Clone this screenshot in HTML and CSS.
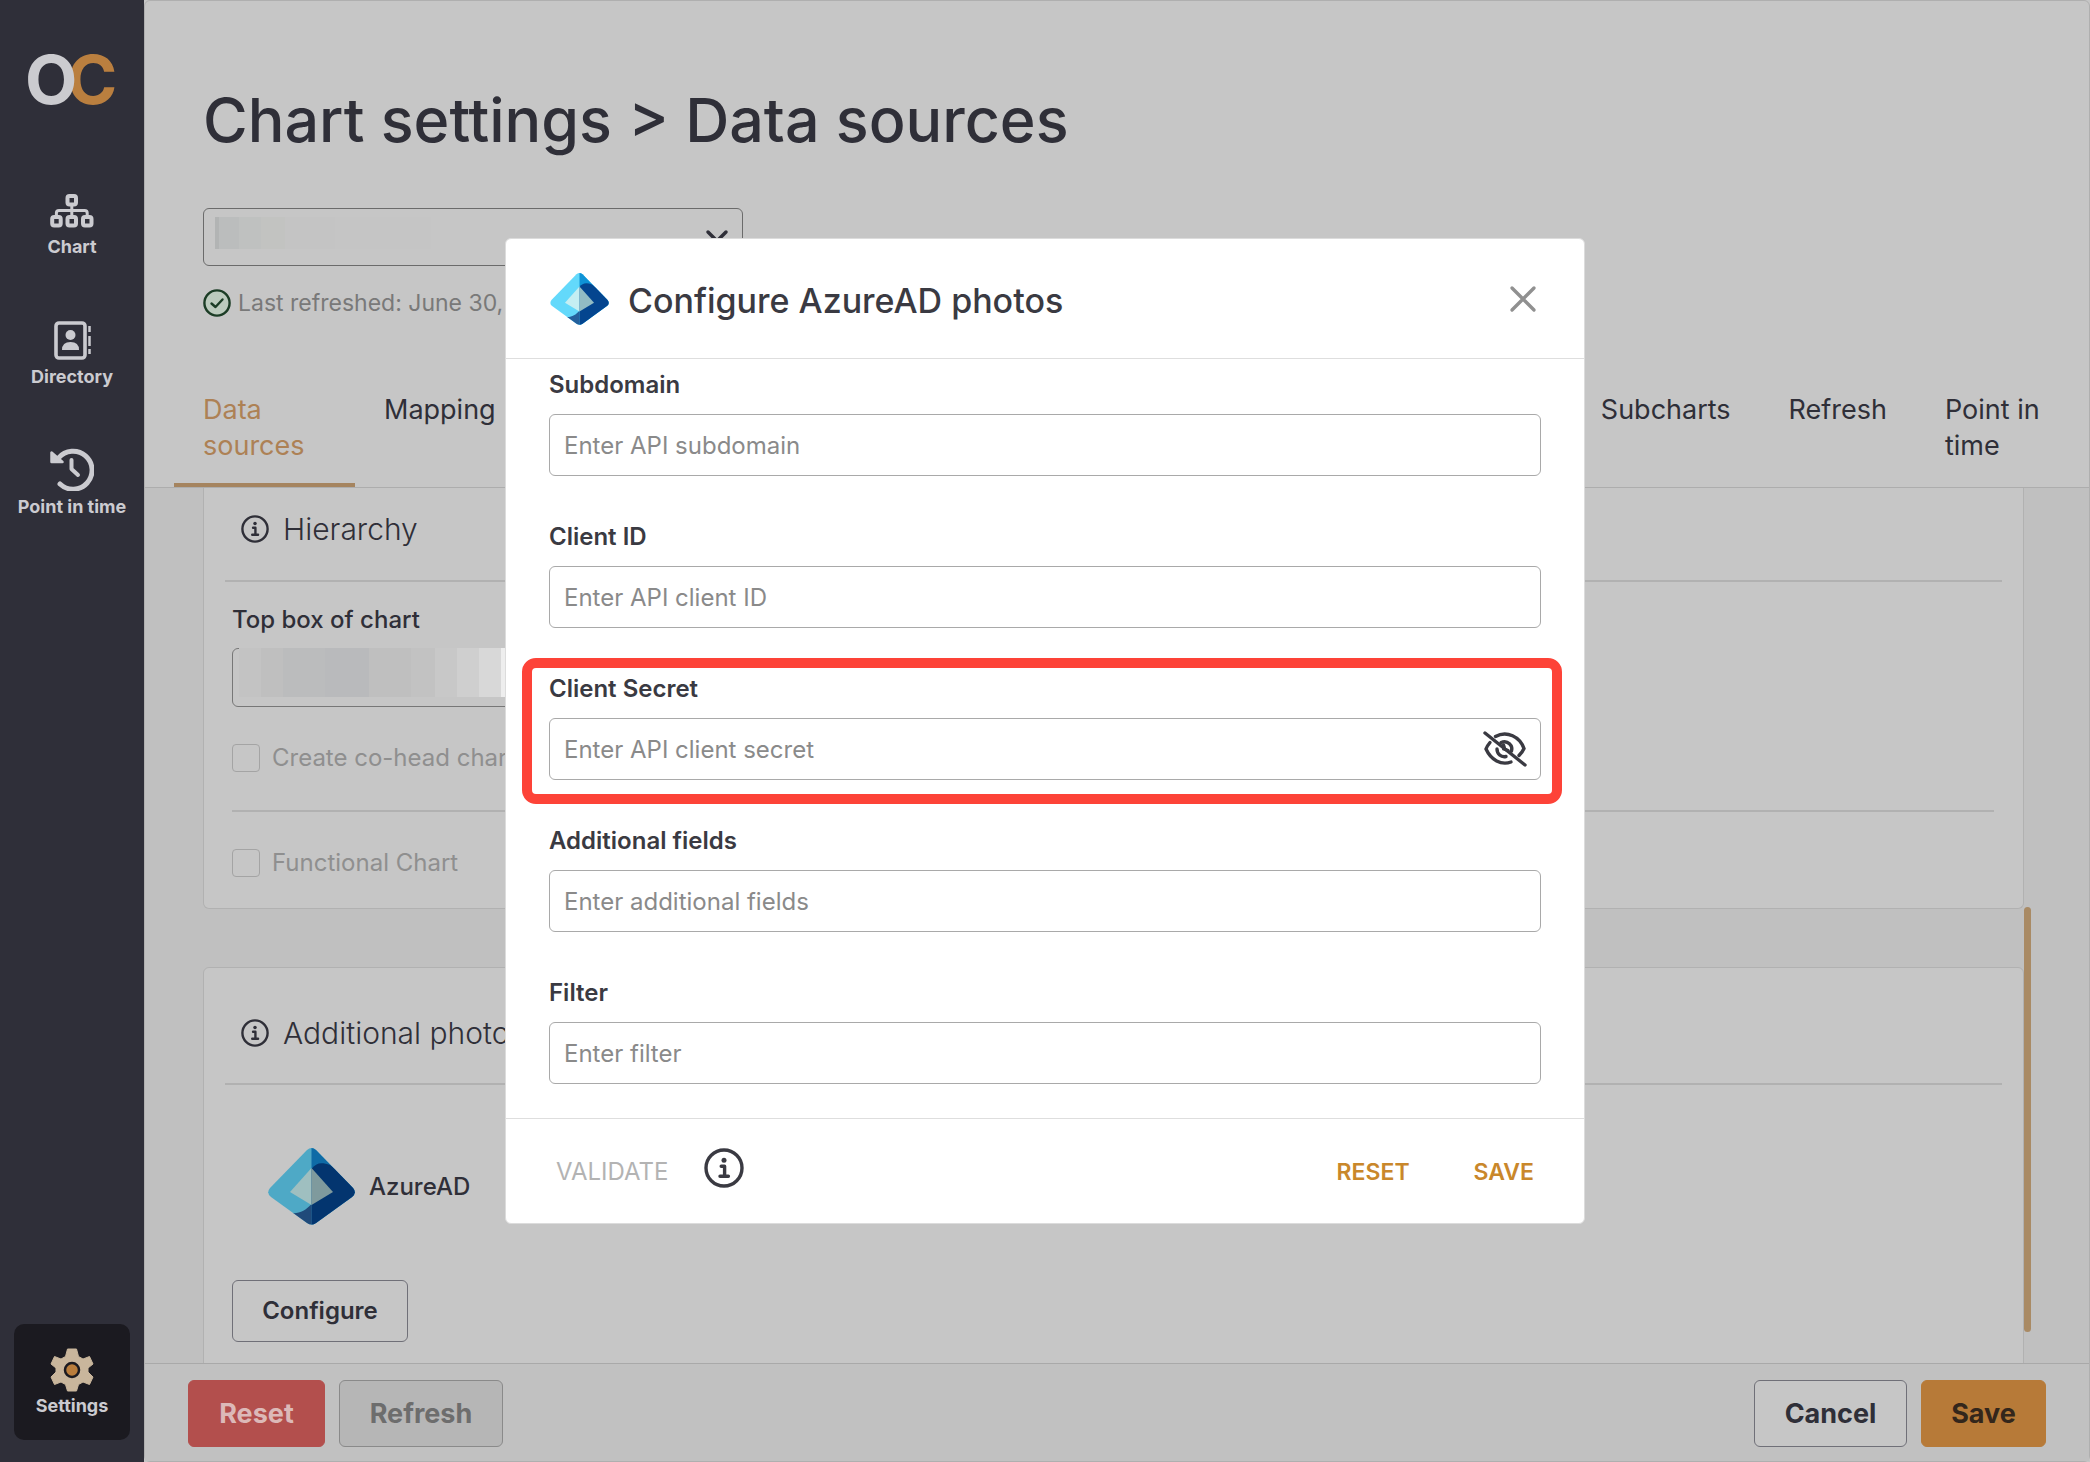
FILE: index.html
```html
<!DOCTYPE html>
<html lang="en">
<head>
<meta charset="utf-8">
<meta name="viewport" content="width=device-width, initial-scale=1">
<title>Chart settings</title>
<link rel="stylesheet" href="styles.css">
</head>
<body>
<svg class="defs" aria-hidden="true">
  <symbol id="info" viewBox="0 0 40 40">
    <circle cx="20" cy="20" r="18" fill="none" stroke="currentColor" stroke-width="3.4"/>
    <circle cx="20" cy="12.2" r="2.5" fill="currentColor"/>
    <path d="M17.2 18.2H20.6V28M16 28.2H24.4" fill="none" stroke="currentColor" stroke-width="3.4" stroke-linecap="round" stroke-linejoin="round"/>
  </symbol>
  <clipPath id="gem"><path d="M39 2Q43.5 -2 48 2L85 40Q89 45 84 49L48 75Q43.5 78 39 75L3 49Q-2 45 2 40Z"/></clipPath>
</svg>
<div class="app">
  <nav class="sidebar">
    <svg class="logo" viewBox="0 0 92 56" role="img" aria-label="OC">
      <text y="52"><tspan x="41" class="logo-c">C</tspan><tspan x="-1" class="logo-o">O</tspan></text>
    </svg>
    <a class="nav-item" href="#">
      <svg width="44" height="40" viewBox="0 0 44 40" fill="none" stroke="currentColor" stroke-width="4">
        <rect x="17.5" y="5" width="8.5" height="8.5" rx="2"/><rect x="2.2" y="26" width="8.5" height="8.5" rx="2"/><rect x="17.5" y="26" width="8.5" height="8.5" rx="2"/><rect x="33" y="26" width="8.5" height="8.5" rx="2"/>
        <path d="M21.8 14V26M6.4 25V22Q6.4 19.5 9 19.5H34.6Q37.2 19.5 37.2 22V25" stroke-width="3"/>
      </svg>
      <span>Chart</span>
    </a>
    <a class="nav-item" href="#">
      <svg width="44" height="40" viewBox="0 0 44 40" fill="none" stroke="currentColor">
        <rect x="6" y="2" width="29" height="35" rx="3" stroke-width="3.6"/>
        <path d="M39.5 5V11M39.5 15V25M39.5 28V33" stroke-width="2.5"/>
        <circle cx="20.5" cy="14" r="5" fill="currentColor" stroke="none"/><path d="M12 29Q12 21 20.5 21T29 29Z" fill="currentColor" stroke="none"/>
      </svg>
      <span>Directory</span>
    </a>
    <a class="nav-item" href="#">
      <svg width="44" height="44" viewBox="0 0 44 44" fill="none" stroke="currentColor" stroke-linecap="round" stroke-linejoin="round">
        <path d="M8.5 11A19 19 0 1 1 10 37" stroke-width="5"/>
        <path d="M1.5 5.5V15H12.5Z" fill="currentColor" stroke-width="2.5"/>
        <path d="M21.5 13V22L28 28" stroke-width="4"/>
      </svg>
      <span>Point in time</span>
    </a>
    <a class="nav-item nav-active" href="#">
      <svg width="44" height="44" viewBox="0 0 44 44">
        <path d="M17.5 1H26.5L28.5 8.5L33 11L39.5 8.5L43 16L38 20V24L43 29L39.5 36.5L33 34L28.5 36.5L26.5 43H17.5L15.5 36.5L11 34L4.5 36.5L1 29L6 24V20L1 16L4.5 8.5L11 11L15.5 8.5Z" fill="#c9b69c" stroke="#c9b69c" stroke-linejoin="round"/>
        <circle cx="22" cy="22" r="7" fill="#b97d3c" stroke="#1b1a20" stroke-width="2.5"/>
      </svg>
      <span>Settings</span>
    </a>
  </nav>
  <main class="main">
    <header class="top">
      <h1>Chart settings &gt; Data sources</h1>
      <button class="chart-select" type="button" aria-label="Select chart">
        <span class="redacted redacted-name"></span>
        <svg width="24" height="16" viewBox="0 0 24 16" fill="none" stroke="currentColor" stroke-width="3.5" stroke-linecap="round"><path d="M3 3L12 12L21 3"/></svg>
      </button>
      <p class="refreshed">
        <svg width="28" height="28" viewBox="0 0 28 28" fill="#bccbbe" stroke="#1c3d26" stroke-width="2.4" stroke-linecap="round" stroke-linejoin="round"><circle cx="14" cy="14" r="12.6"/><path d="M8.5 14.5L12.5 18L19.5 10.5" fill="none"/></svg>
        <span>Last refreshed: June 30,</span>
      </p>
    </header>
    <nav class="tabs">
      <a class="tab tab-active" href="#">Data sources</a>
      <a class="tab" href="#">Mapping</a>
      <a class="tab tab-push" href="#">Subcharts</a>
      <a class="tab" href="#">Refresh</a>
      <a class="tab tab-last" href="#">Point in time</a>
    </nav>
    <div class="scroll">
      <section class="card card-first">
        <h2><svg width="28" height="28"><use href="#info"/></svg>Hierarchy</h2>
        <hr>
        <div class="card-body">
          <label class="card-label" for="topbox">Top box of chart</label>
          <div class="topbox"><input id="topbox" type="text"><span class="redacted redacted-box"></span></div>
          <label class="check"><input type="checkbox" disabled>Create co-head chart</label>
          <hr>
          <label class="check"><input type="checkbox" disabled>Functional Chart</label>
        </div>
      </section>
      <section class="card card-photos">
        <h2><svg width="28" height="28"><use href="#info"/></svg>Additional photos</h2>
        <hr>
        <div class="card-body">
          <div class="source">
            <svg width="87" height="77" viewBox="0 0 87 77"><g clip-path="url(#gem)">
              <rect width="87" height="77" fill="#4ea9c6"/><path d="M43.5 0H87V77H43.5Z" fill="#0e6ba6"/>
              <path d="M43.5 21C48 15 53 14 62 17L90 36V80H43.5Z" fill="#03356f"/>
              <path d="M20 64.5C30 67 37 63 43.5 56V78H20Z" fill="#204a7a"/></g>
              <path d="M43.5 20V57L22 44Z" fill="#9fbfc0"/><path d="M43.5 20V57L65 44Z" fill="#7f9a9d"/>
            </svg>
            <span>AzureAD</span>
          </div>
          <button class="btn btn-configure" type="button">Configure</button>
        </div>
      </section>
      <span class="thumb"></span>
    </div>
    <footer class="actions">
      <button class="btn btn-danger" type="button">Reset</button>
      <button class="btn btn-disabled" type="button" disabled>Refresh</button>
      <button class="btn btn-cancel" type="button">Cancel</button>
      <button class="btn btn-save" type="button">Save</button>
    </footer>
  </main>
</div>
<div class="overlay">
  <form class="dialog" role="dialog" aria-labelledby="dialog-title">
    <header class="dialog-head">
      <svg width="59" height="52" viewBox="0 0 87 77"><g clip-path="url(#gem)">
        <rect width="87" height="77" fill="#63d9fb"/><path d="M43.5 0H87V77H43.5Z" fill="#0f93d6"/>
        <path d="M43.5 21C48 15 53 14 62 17L90 36V80H43.5Z" fill="#04458f"/>
        <path d="M20 64.5C30 67 37 63 43.5 56V78H20Z" fill="#24609c"/></g>
        <path d="M43.5 20V57L22 44Z" fill="#c5eef2"/><path d="M43.5 20V57L65 44Z" fill="#92bcc4"/>
      </svg>
      <h2 id="dialog-title">Configure AzureAD photos</h2>
      <button class="close" type="button" aria-label="Close"><svg width="28" height="28" viewBox="0 0 28 28" fill="none" stroke="currentColor" stroke-width="3.4" stroke-linecap="round"><path d="M3 3L25 25M25 3L3 25"/></svg></button>
    </header>
    <div class="dialog-body">
      <div class="field"><label for="f1">Subdomain</label><input id="f1" type="text" placeholder="Enter API subdomain"></div>
      <div class="field"><label for="f2">Client ID</label><input id="f2" type="text" placeholder="Enter API client ID"></div>
      <div class="field field-marked"><label for="f3">Client Secret</label>
        <div class="secret"><input id="f3" type="password" placeholder="Enter API client secret">
          <button class="eye" type="button" aria-label="Show secret"><svg width="44" height="38" viewBox="0 0 44 38" fill="none" stroke="currentColor" stroke-width="3.4" stroke-linecap="round">
            <path d="M2 3L42 35"/>
            <path d="M12.5 6.5C24 0 37 7 41 18.5Q39.5 22 36 25.5"/>
            <path d="M7 12.5Q4 16 3 19C8 30 18 35.5 28 32"/>
            <path d="M18 12.5C25 9.5 30 16 28.5 21"/>
            <path d="M14 19C14 24 18 27.5 23 26.5"/>
            <path d="M20.5 15Q21.5 17 21 19L25 20.5"/>
          </svg></button></div>
      </div>
      <div class="field"><label for="f4">Additional fields</label><input id="f4" type="text" placeholder="Enter additional fields"></div>
      <div class="field"><label for="f5">Filter</label><input id="f5" type="text" placeholder="Enter filter"></div>
    </div>
    <footer class="dialog-foot">
      <button class="link link-off" type="button" disabled>VALIDATE</button>
      <svg width="40" height="40"><use href="#info"/></svg>
      <button class="link link-reset" type="button">RESET</button>
      <button class="link" type="button">SAVE</button>
    </footer>
  </form>
</div>
</body>
</html>
```
FILE: styles.css
```css
* { box-sizing: border-box; }
body { margin: 0; background: #c6c6c6; color: #2f2f38; font-family: Inter, "Liberation Sans", sans-serif; font-size: 24px; line-height: 32px; }
h1, h2, p { margin: 0; }
hr { width: 100%; height: 2px; margin: 0; border: 0; background: #b1b1b1; }
svg { display: block; flex: none; }
button, input { margin: 0; font: inherit; color: inherit; }
a { color: inherit; text-decoration: none; }
.defs { position: absolute; width: 0; height: 0; }
.app { display: flex; height: 100vh; background: #c6c6c6; }

.sidebar { display: flex; flex-direction: column; flex: none; width: 144px; padding: 52px 14px 22px; background: #2f2f39; color: #cbcbd0; }
.logo { align-self: center; width: 92px; height: 56px; margin-bottom: 71px; overflow: visible; }
.logo text { font-size: 68px; font-weight: 700; }
.logo-o { fill: #cbcbcf; }
.logo-c { fill: #ba7f3f; }
.nav-item { display: flex; flex-direction: column; align-items: center; justify-content: flex-end; gap: 4px; height: 80px; margin-bottom: 50px; font-size: 18px; line-height: 24px; font-weight: 700; white-space: nowrap; }
.nav-active { gap: 2px; height: 116px; margin: auto 0 0; padding-bottom: 22px; border-radius: 10px; background: #1b1a20; }

.main { display: flex; flex: 1; flex-direction: column; min-width: 0; border: 1px solid #afafaf; border-radius: 6px; }
.top { padding: 81px 58px 0; }
h1 { font-size: 61px; line-height: 76px; font-weight: 500; }
.chart-select { display: flex; align-items: center; justify-content: space-between; width: 540px; height: 58px; margin-top: 50px; padding: 0 13px 0 11px; border: 1px solid #6b6b6b; border-radius: 6px; background: none; }
.redacted { display: block; }
.redacted-name { width: 216px; height: 32px; margin-bottom: 8px; background: linear-gradient(90deg, #b2b4b4 0 4px, #bbbdbd 4px 24px, #bfc1c0 24px 46px, #c2c3c1 46px 70px, #c4c4c4 70px 120px, #c5c5c5 120px); }
.refreshed { display: flex; align-items: center; gap: 7px; margin-top: 21px; color: #797979; font-size: 23px; }
.tabs { display: flex; height: 121px; margin-top: 48px; padding: 25px 18px 0 29px; border-bottom: 1px solid #adadad; font-size: 27px; line-height: 36px; }
.tab { padding: 0 29px; }
.tab-active { width: 181px; border-bottom: 4px solid #a5845f; color: #ad8155; }
.tab-push { margin-left: auto; }
.tab-last { width: 155px; }

.scroll { position: relative; display: flex; flex: 1; flex-direction: column; gap: 58px; min-height: 0; padding: 0 65px 0 58px; overflow: hidden; background: #c0c0c0; }
.card { flex: none; padding: 0 21px; border: 1px solid #b1b1b1; border-radius: 6px; background: #c6c6c6; }
.card-first { border-top: 0; border-radius: 0 0 6px 6px; }
.card h2 { display: flex; align-items: center; gap: 14px; height: 92px; padding: 0 0 10px 16px; font-size: 30px; font-weight: 300; }
.card-photos h2 { height: 115px; padding: 15px 0 0 16px; }
.card-body { display: flex; flex-direction: column; align-items: flex-start; padding: 0 8px 0 7px; }
.card-label { margin: 22px 0 12px; font-weight: 500; }
.topbox { position: relative; width: 540px; }
.topbox input { display: block; width: 100%; height: 59px; border: 1px solid #777; border-radius: 6px; background: none; }
.redacted-box { position: absolute; left: 7px; top: 0; width: 268px; height: 49px; background: linear-gradient(90deg, #c3c3c3 0 22px, #bfbfbf 22px 44px, #bbbcbd 44px 86px, #b9babc 86px 130px, #bfbfbf 130px 172px, #c2c2c2 172px 196px, #c8c8c8 196px 218px, #cfcfcf 218px 240px, #d8d8d8 240px 262px, #eee 262px); }
.check { display: flex; align-items: center; gap: 12px; height: 28px; margin-top: 37px; color: #8f8f8f; }
.check input { appearance: none; width: 28px; height: 28px; border: 1px solid #a4a4a4; border-radius: 4px; }
.card-body hr { margin-top: 38px; }
.card-first .card-body { padding-bottom: 31px; }
.source { display: flex; align-items: center; gap: 14px; margin: 63px 0 55px 36px; font-weight: 500; }
.btn { height: 67px; padding: 0; border: 1px solid #707078; border-radius: 6px; background: #c6c6c6; font-size: 27px; font-weight: 700; }
.btn-configure { width: 176px; height: 62px; margin-bottom: 58px; font-size: 24px; font-weight: 600; }
.thumb { position: absolute; right: 58px; top: 419px; width: 7px; height: 425px; border-radius: 4px; background: #a98a64; }
.actions { display: flex; flex: none; align-items: center; gap: 14px; height: 98px; padding: 2px 43px 0; border-top: 1px solid #a9a9a9; background: #c1c1c1; }
.btn-danger { width: 137px; border-color: #b34f4d; background: #b34f4d; color: #dcb9b8; }
.btn-disabled { width: 164px; border-color: #8a8a8a; background: #b6b6b6; color: #6d6d6d; }
.btn-cancel { width: 153px; margin-left: auto; }
.btn-save { width: 125px; border-color: #b77a38; background: #b77a38; color: #33261b; }

.overlay { position: fixed; inset: 0; display: flex; align-items: center; justify-content: center; }
.dialog { width: 1080px; border: 1px solid #dcdcdc; border-radius: 6px; background: #fff; color: #3a3a42; }
.dialog-head { display: flex; align-items: center; height: 120px; padding: 0 47px 0 44px; border-bottom: 1px solid #dedede; }
.dialog-head h2 { margin-left: 19px; padding-top: 4px; font-size: 34px; line-height: 44px; font-weight: 500; }
.close, .eye { display: flex; padding: 0; border: 0; background: none; }
.close { margin-left: auto; color: #909090; }
.dialog-body { display: flex; flex-direction: column; gap: 46px; padding: 11px 43px 34px; }
.field { position: relative; display: flex; flex-direction: column; gap: 14px; }
.field label { line-height: 30px; font-weight: 600; }
.field input { width: 100%; height: 62px; padding: 0 14px; border: 1px solid #a9a9a9; border-radius: 6px; background: #fff; }
.field input::placeholder { color: #8a8a8a; opacity: 1; }
.secret { position: relative; }
.secret input { display: block; }
.eye { position: absolute; right: 14px; top: 12px; }
.field-marked::after { content: ""; position: absolute; inset: -16px -21px -24px -27px; border: 10px solid #fd4338; border-radius: 14px; pointer-events: none; }
.dialog-foot { display: flex; align-items: center; height: 105px; padding: 2px 50px 0; border-top: 1px solid #dedede; }
.dialog-foot svg { margin: 0 0 8px 36px; }
.link { padding: 0; border: 0; background: none; color: #c9872b; font-size: 23px; font-weight: 600; }
.link-off { color: #b3b3b3; font-size: 24px; font-weight: 400; }
.link-reset { margin: 0 64px 0 auto; }
```
